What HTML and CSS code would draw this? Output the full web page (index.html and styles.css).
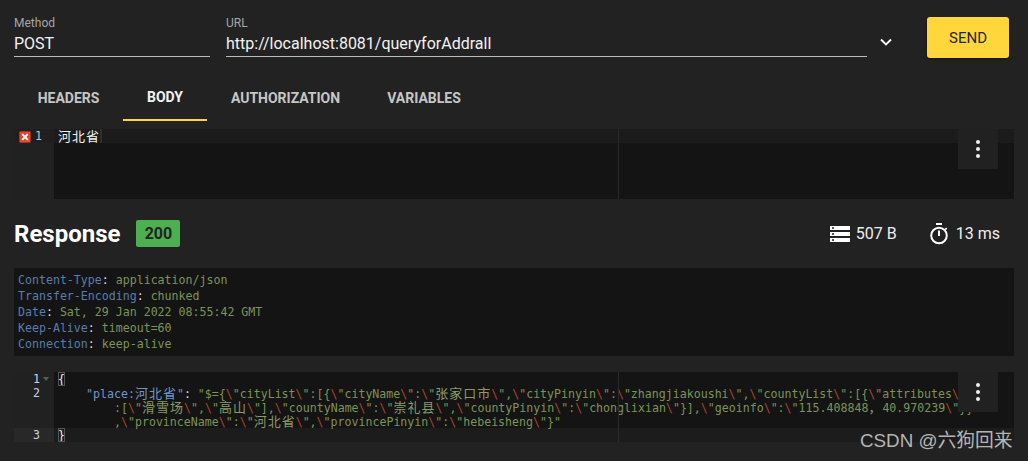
FILE: index.html
```html
<!DOCTYPE html>
<html lang="en">
<head>
<meta charset="utf-8">
<title>Altair</title>
<link rel="stylesheet" href="styles.css">
</head>
<body>
<main class="app">
  <section class="request">
    <div class="field method"><label>Method</label><div class="value">POST</div></div>
    <div class="field url"><label>URL</label><div class="value">http://localhost:8081/queryforAddrall</div></div>
    <svg class="chevron" width="12" height="8" viewBox="0 0 12 8"><path d="M1 1.500l5 5 5-5" fill="none" stroke="#fff" stroke-width="1.800"/></svg>
    <button class="send">SEND</button>
  </section>
  <nav class="tabs">
    <a class="tab t1">HEADERS</a>
    <a class="tab t2 active">BODY</a>
    <a class="tab t3">AUTHORIZATION</a>
    <a class="tab t4">VARIABLES</a>
  </nav>
  <section class="editor body-editor">
    <div class="gutter">
      <div class="gline active-g"><svg class="err" width="12" height="12" viewBox="0 0 12 12"><rect x=".5" y=".5" width="11" height="11" rx="1" fill="#e0482f" stroke="#a83322"/><path d="M3.200 3.200l5.600 5.600M8.800 3.200l-5.600 5.600" stroke="#fff" stroke-width="1.800"/></svg><span class="num">1</span></div>
    </div>
    <div class="code">
      <div class="line active-l"><span class="cjk white">河北省</span><span class="cursor"></span></div>
    </div>
    <div class="rule"></div>
    <button class="kebab"><span></span><span></span><span></span></button>
  </section>
  <section class="resp-head">
    <h2>Response</h2>
    <span class="badge">200</span>
    <div class="stats">
      <svg width="20" height="16" viewBox="0 0 20 16"><path fill="#fff" d="M0 0h20v4H0zM0 6h20v4H0zM0 12h20v4H0z"/><path fill="#222" d="M2 1.300h2v1.400H2zM2 7.300h2v1.400H2zM2 13.300h2v1.400H2z"/></svg>
      <span class="stat-text s1">507 B</span>
      <svg width="20" height="22" viewBox="0 0 20 22"><path fill="#fff" d="M7 0h6v2H7z"/><circle cx="10" cy="12.500" r="7.800" fill="none" stroke="#fff" stroke-width="2"/><path d="M10 7.500v5.500" stroke="#fff" stroke-width="2"/><path d="M15.500 6l1.500-1.500 1.300 1.300-1.500 1.500z" fill="#fff"/></svg>
      <span class="stat-text">13 ms</span>
    </div>
  </section>
  <pre class="headers"><span class="k">Content-Type</span>: <span class="s">application/json</span>
<span class="k">Transfer-Encoding</span>: <span class="s">chunked</span>
<span class="k">Date</span>: <span class="s">Sat, 29 Jan 2022 08:55:42 GMT</span>
<span class="k">Keep-Alive</span>: <span class="s">timeout=60</span>
<span class="k">Connection</span>: <span class="s">keep-alive</span></pre>
  <section class="editor json-editor">
    <div class="gutter">
      <div class="gline"><span class="num bright">1</span><span class="fold"></span></div>
      <div class="gline"><span class="num bright">2</span></div>
      <div class="gline"></div>
      <div class="gline"></div>
      <div class="gline active-g"><span class="num bright">3</span></div>
    </div>
    <div class="code">
      <div class="line"><span class="match">{</span></div>
      <div class="line ind1"><span class="k">"place:<span class="cjk">河北省</span>"</span>: <span class="s">"$={<i>\</i>"cityList<i>\</i>":[{<i>\</i>"cityName<i>\</i>":<i>\</i>"<span class="cjk">张家口市</span><i>\</i>",<i>\</i>"cityPinyin<i>\</i>":<i>\</i>"zhangjiakoushi<i>\</i>",<i>\</i>"countyList<i>\</i>":[{<i>\</i>"attributes<i>\</i>"</span></div>
      <div class="line ind2"><span class="s">:[<i>\</i>"<span class="cjk">滑雪场</span><i>\</i>",<i>\</i>"<span class="cjk">高山</span><i>\</i>"],<i>\</i>"countyName<i>\</i>":<i>\</i>"<span class="cjk">崇礼县</span><i>\</i>",<i>\</i>"countyPinyin<i>\</i>":<i>\</i>"chonglixian<i>\</i>"}],<i>\</i>"geoinfo<i>\</i>":<i>\</i>"115.408848<span class="cjk">，</span>40.970239<i>\</i>"}}</span></div>
      <div class="line ind2"><span class="s">,<i>\</i>"provinceName<i>\</i>":<i>\</i>"<span class="cjk">河北省</span><i>\</i>",<i>\</i>"provincePinyin<i>\</i>":<i>\</i>"hebeisheng<i>\</i>"}"</span></div>
      <div class="line active-l"><span class="match">}</span></div>
    </div>
    <div class="rule"></div>
    <button class="kebab"><span></span><span></span><span></span></button>
  </section>
  <div class="watermark">CSDN @六狗回来</div>
</main>
</body>
</html>
```
FILE: styles.css
```css
* { box-sizing: border-box; }
html, body { margin: 0; height: 100%; }
body { background: #222; color: #fff; font-family: Roboto, sans-serif; overflow: hidden; }
.app { position: relative; width: 1028px; height: 461px; padding: 0 14px; }

.request { display: flex; align-items: flex-start; height: 70px; padding-top: 17px; }
.field { display: flex; flex-direction: column; height: 41px; margin-top: -1px; border-bottom: 1px solid #bdbdbd; }
.field label { font-size: 12px; line-height: 14px; color: #a6a6a6; }
.field .value { margin-top: 4px; font-size: 16px; line-height: 19px; color: #f2f2f2; }
.method { width: 196px; margin-right: 16px; }
.url { width: 641px; }
.chevron { margin: 21px 0 0 13px; }
.send { width: 82px; height: 41px; margin-left: 35px; border: 0; border-radius: 3px; background: #ffd73d; color: #262626; font: 400 15px Roboto, sans-serif; box-shadow: 0 1px 3px rgba(0,0,0,.4); }

.tabs { display: flex; height: 51px; }
.tab { display: flex; align-items: center; justify-content: center; height: 51px; padding-top: 4px; font-size: 14px; font-weight: 700; color: #c6c6c6; }
.t1 { width: 109px; }
.t2 { width: 84px; color: #f2f2f2; border-bottom: 2px solid #ffd73d; }
.t3 { width: 133px; margin-left: 12px; }
.t4 { width: 90px; margin-left: 27px; }

.editor { position: relative; display: flex; width: 1000px; height: 70px; background: #141414; }
.body-editor { margin-top: 8px; }
.gutter { flex: none; width: 40px; background: #212121; }
.gline { display: flex; align-items: center; height: 14px; font: 11.6px/14px "DejaVu Sans Mono", monospace; }
.gutter .active-g { background: #282828; }
.body-editor .gutter .active-g { background: #1f1f1f; }
.err { margin: 1px 0 0 5px; }
.num { margin-left: 4px; color: #b4c4dc; }
.bright { width: 26px; margin-left: 0; text-align: right; color: #c4d4ea; }
.fold { width: 0; height: 0; margin-left: 3px; border: 3px solid transparent; border-top: 4px solid #5c5c5c; border-bottom: 0; }
.code { flex: 1; min-width: 0; color: #ddd; font: 11.6px/14px "DejaVu Sans Mono", monospace; overflow: hidden; }
.line { height: 14px; padding-left: 4px; white-space: pre; }
.body-editor .active-l { background: #1b1b1b; }
.json-editor .active-l { background: #1c1c1c; }
.ind1 { padding-left: 32px; }
.ind2 { padding-left: 60px; }
.cjk { font-family: "Noto Sans CJK SC", sans-serif; font-size: 13px; letter-spacing: 1px; line-height: 14px; }
.white { color: #f2f2f2; }
.cursor { display: inline-block; width: 2px; height: 14px; background: #2e2e2e; vertical-align: top; }
.match { display: inline-block; height: 14px; line-height: 14px; outline: 1px solid #555; outline-offset: -1px; color: #eee; }
.rule { position: absolute; left: 604px; top: 0; bottom: 0; width: 1px; background: #2a2a2a; }
.kebab { position: absolute; top: 0; left: 944px; display: flex; flex-direction: column; align-items: center; justify-content: center; gap: 3px; width: 40px; height: 40px; border: 0; padding: 0; background: #212121; }
.kebab span { width: 4px; height: 4px; border-radius: 50%; background: #f0f0f0; }

.resp-head { display: flex; align-items: center; height: 69px; }
.resp-head h2 { margin: 0; font-size: 24px; font-weight: 700; line-height: 28px; color: #fff; }
.badge { width: 44px; height: 27px; margin: -1px 0 0 16px; border-radius: 2px; background: #4caf50; color: #222; font-size: 16px; font-weight: 700; line-height: 27px; text-align: center; }
.stats { display: flex; align-items: center; margin-left: auto; padding-right: 14px; }
.stats svg { flex: none; }
.stat-text { margin-left: 7px; font-size: 16px; color: #eee; }
.stat-text.s1 { margin: 0 32px 0 6px; }

.headers { height: 88px; margin: 0 0 16px; padding: 4px; background: #141414; color: #ddd; font: 11.6px/16px "DejaVu Sans Mono", monospace; }
.k { color: #5a7dab; }
.s { color: #7d9358; }
.s i { font-style: normal; color: #a8442e; }
.json-editor .k { color: #6f96c9; }
.json-editor .s .cjk { color: #8b9a68; }

.watermark { position: absolute; left: 860px; top: 429px; color: #b5b5b5; font: 18.8px/24px "Liberation Sans", "Noto Sans CJK SC", sans-serif; white-space: nowrap; }
```
